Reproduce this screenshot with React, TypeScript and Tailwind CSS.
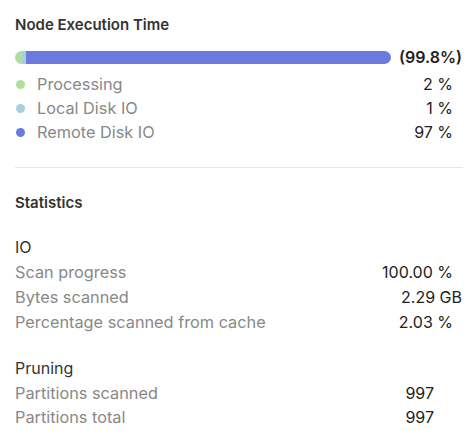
import React from 'react';

const legend = [
  { label: 'Processing', value: '2 %', dot: 'bg-[#b3dba2]' },
  { label: 'Local Disk IO', value: '1 %', dot: 'bg-[#a3d2d9]' },
  { label: 'Remote Disk IO', value: '97 %', dot: 'bg-[#6c7ae0]' },
];

const ioRows = [
  { label: 'Scan progress', value: '100.00 %', pad: 'pr-[9px]' },
  { label: 'Bytes scanned', value: '2.29 GB', pad: 'pr-0' },
  { label: 'Percentage scanned from cache', value: '2.03 %', pad: 'pr-[9px]' },
];

const pruningRows = [
  { label: 'Partitions scanned', value: '997' },
  { label: 'Partitions total', value: '997' },
];

const App: React.FC = () => {
  return (
    <div
      className="w-[474px] h-[441px] bg-white pl-[15px] pr-[12px] pt-[15px] overflow-hidden"
      style={{ fontFamily: 'Inter, "Noto Sans", sans-serif' }}
    >
      <h2 className="text-[15px] leading-[20px] font-semibold text-[#333]">Node Execution Time</h2>

      <div className="mt-[10px] flex items-center h-[24px]">
        <div className="w-[378px] h-[13px] rounded-full overflow-hidden flex">
          <div className="w-[7px] bg-[#b3dba2]" />
          <div className="w-[4px] bg-[#a3d2d9]" />
          <div className="flex-1 bg-[#6c7ae0]" />
        </div>
        <span className="ml-[8px] text-[16px] font-semibold text-[#222]">(99.8%)</span>
      </div>

      <div className="mt-[3px]">
        {legend.map(item => (
          <div key={item.label} className="flex items-center h-[24px] text-[16px] pr-[9px]">
            <span className={`w-[9px] h-[9px] rounded-full ml-[1px] ${item.dot}`} />
            <span className="ml-[12px] text-[16.3px] text-[#888]">{item.label}</span>
            <span className="ml-auto text-[#222]">{item.value}</span>
          </div>
        ))}
      </div>

      <div className="mt-[23px] mr-[-1px] h-px bg-[#e6e6e6]" />

      <h2 className="mt-[25px] text-[15px] leading-[20px] font-semibold text-[#333]">Statistics</h2>

      <div className="mt-[22px] text-[16px] leading-[25px]">
        <div className="text-[#333]">IO</div>
        {ioRows.map(row => (
          <div key={row.label} className={`flex ${row.pad}`}>
            <span className="text-[16.3px] text-[#888]">{row.label}</span>
            <span className="ml-auto text-[#222]">{row.value}</span>
          </div>
        ))}
      </div>

      <div className="mt-[21px] text-[16px] leading-[24.5px]">
        <div className="text-[#333]">Pruning</div>
        {pruningRows.map(row => (
          <div key={row.label} className="flex pr-[28px]">
            <span className="text-[16.3px] text-[#888]">{row.label}</span>
            <span className="ml-auto text-[#222]">{row.value}</span>
          </div>
        ))}
      </div>
    </div>
  );
};

export default App;
